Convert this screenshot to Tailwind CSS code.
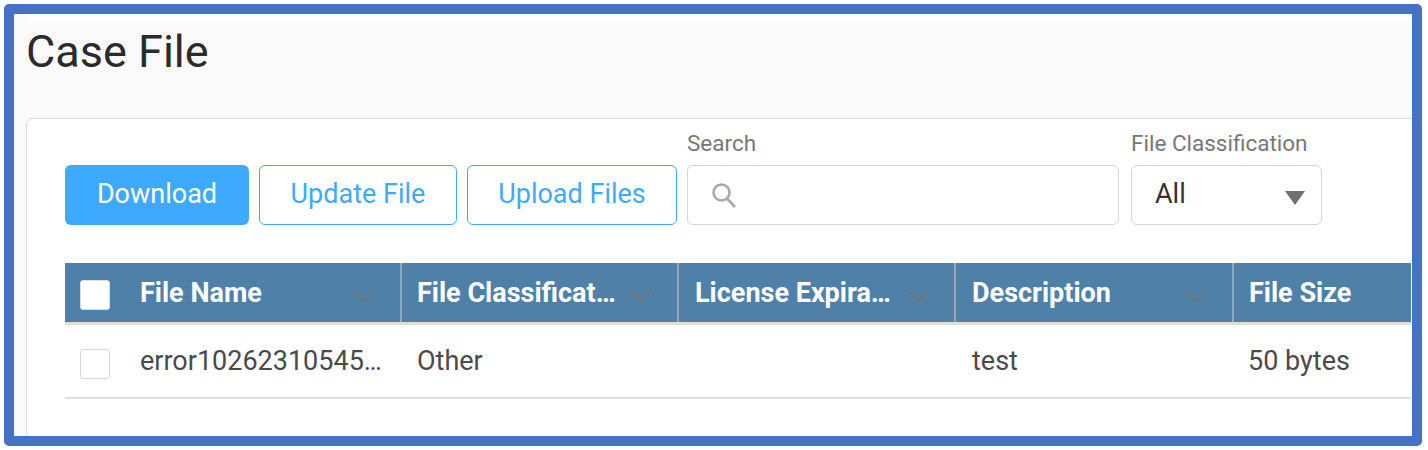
<!DOCTYPE html>
<html lang="en">
	<head>
		<meta charset="UTF-8" />
		<title>Case File</title>
		<script src="https://cdn.jsdelivr.net/npm/@tailwindcss/browser@4"></script>
	</head>
	<body class="bg-white font-['Roboto',sans-serif]">
		<div class="w-[1428px] h-[450px] pl-[4px] pt-[4px] overflow-hidden">
			<div class="w-[1418px] h-[442px] border-[10px] border-[#4472c4] rounded-[5px] bg-[#fafafa] overflow-hidden">
				<div class="ml-[12px] h-[9px] bg-white rounded-bl-[6px]"></div>
				<h1 class="ml-[12px] mt-[5px] h-[47px] text-[45px] leading-[47px] text-[#2b2b2b]">Case File</h1>
				<div class="ml-[12px] mt-[43px] h-[320px] w-[1400px] bg-white border border-[#dcdcdc] rounded-[6px] pl-[38px] pt-[12px]">
					<div class="flex items-end">
						<button class="w-[184px] h-[60px] pb-[1px] bg-[#3eaaff] rounded-[6px] text-white text-[27px]">Download</button>
						<button class="ml-[10px] w-[198px] h-[60px] pb-[1px] bg-white border-[1.5px] border-[#3eaaff] rounded-[6px] text-[#3eaaff] text-[27px]">Update File</button>
						<button class="ml-[10px] w-[210px] h-[60px] pb-[1px] bg-white border-[1.5px] border-[#3eaaff] rounded-[6px] text-[#3eaaff] text-[27px]">Upload Files</button>
						<div class="ml-[10px]">
							<div class="h-[34px] text-[22.5px] leading-[24px] text-[#777777]">Search</div>
							<div class="w-[432px] h-[60px] border-[1.5px] border-[#d5d5d5] rounded-[6px] flex items-center pl-[23px]">
								<svg width="26" height="26" viewBox="0 0 26 26" fill="none" stroke="#a8a8a8" stroke-width="2.6">
									<circle cx="10.5" cy="10.5" r="8" />
									<path d="M16 16.5 L24 25" />
								</svg>
							</div>
						</div>
						<div class="ml-[12px]">
							<div class="h-[34px] text-[22.5px] leading-[24px] text-[#777777]">File Classification</div>
							<div class="w-[191px] h-[60px] border-[1.5px] border-[#d5d5d5] rounded-[6px] flex items-center justify-between pl-[23px] pr-[16px]">
								<span class="text-[27px] pb-[1px] text-[#333333]">All</span>
								<svg width="20" height="14" viewBox="0 0 20 14" class="mt-[6px]"><path d="M0 0 H20 L10 14 Z" fill="#707070" /></svg>
							</div>
						</div>
					</div>
					<table class="mt-[38px] table-fixed w-[1346px] border-collapse">
						<thead>
							<tr class="h-[60px] bg-[#4f81a8] text-white text-[27px] text-left">
								<th class="w-[336px] p-0 font-bold">
									<div class="flex items-center pl-[15px] pr-[24px]">
										<span class="w-[30px] h-[30px] mt-[6px] bg-white rounded-[3px] border border-[#dddddd] shrink-0"></span>
										<span class="ml-[30px] flex-1 mt-[2px]">File Name</span>
										<svg width="24" height="14" viewBox="0 0 24 14" fill="none" stroke="#6b747a" stroke-width="2.4" class="mt-[8px]"><path d="M1 1 L12 12 L23 1" /></svg>
									</div>
								</th>
								<th class="w-[277px] p-0 font-bold border-l-2 border-[#9aa6ae]">
									<div class="flex items-center pl-[15px] pr-[24px]">
										<span class="flex-1 truncate mr-[12px] mt-[2px]">File Classification</span>
										<svg width="24" height="14" viewBox="0 0 24 14" fill="none" stroke="#6b747a" stroke-width="2.4" class="mt-[8px] shrink-0"><path d="M1 1 L12 12 L23 1" /></svg>
									</div>
								</th>
								<th class="w-[277px] p-0 font-bold border-l-2 border-[#9aa6ae]">
									<div class="flex items-center pl-[16px] pr-[24px]">
										<span class="flex-1 truncate mr-[11px] mt-[2px]">License Expiration</span>
										<svg width="24" height="14" viewBox="0 0 24 14" fill="none" stroke="#6b747a" stroke-width="2.4" class="mt-[8px] shrink-0"><path d="M1 1 L12 12 L23 1" /></svg>
									</div>
								</th>
								<th class="w-[278px] p-0 font-bold border-l-2 border-[#9aa6ae]">
									<div class="flex items-center pl-[16px] pr-[24px]">
										<span class="flex-1 truncate mt-[2px]">Description</span>
										<svg width="24" height="14" viewBox="0 0 24 14" fill="none" stroke="#6b747a" stroke-width="2.4" class="mt-[8px] shrink-0"><path d="M1 1 L12 12 L23 1" /></svg>
									</div>
								</th>
								<th class="p-0 font-bold border-l-2 border-[#9aa6ae]">
									<div class="pl-[15px] mt-[2px]">File Size</div>
								</th>
							</tr>
						</thead>
						<tbody>
							<tr class="h-[75px] border-t-[3px] border-b-2 border-[#dedede] text-[27px] text-[#4a4a4a]">
								<td class="p-0">
									<div class="flex items-center pl-[15px]">
										<span class="w-[30px] h-[30px] mt-[6px] bg-white rounded-[3px] border-[1.5px] border-[#d8d8d8] shrink-0"></span>
										<span class="ml-[30px] w-[245px] truncate">error102623105451.txt</span>
									</div>
								</td>
								<td class="p-0 pl-[16px]">Other</td>
								<td class="p-0 pl-[16px]"></td>
								<td class="p-0 pl-[17px]">test</td>
								<td class="p-0 pl-[15px]">50 bytes</td>
							</tr>
						</tbody>
					</table>
				</div>
			</div>
		</div>
	</body>
</html>
